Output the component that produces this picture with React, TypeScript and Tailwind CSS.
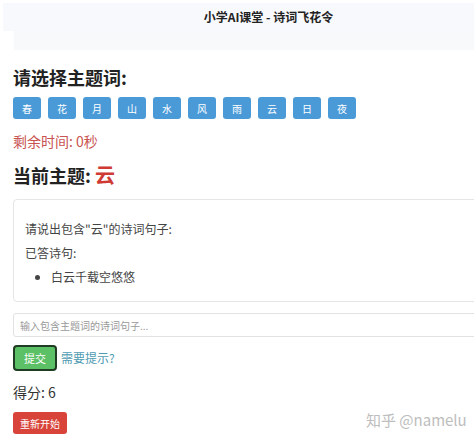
import React, { useState } from 'react';

const TOPICS = ['春', '花', '月', '山', '水', '风', '雨', '云', '日', '夜'];

function App() {
  const [topic, setTopic] = useState('云');
  const [answer, setAnswer] = useState('');
  const answered = ['白云千载空悠悠'];

  return (
    <div className="w-[474px] h-[440px] overflow-hidden bg-white relative" style={{ fontFamily: '"Noto Sans CJK SC", "Noto Sans", sans-serif' }}>
      <div className="w-[534px] text-[#333]">
        {/* Header */}
        <header className="ml-[3px] mt-[3px] h-[28px] bg-[#f8f9fc] flex items-center justify-center text-[12px] font-bold text-[#222]">
          小学AI课堂 - 诗词飞花令
        </header>
        <div className="ml-[14px] h-[19px] bg-[#f8f9fa]" />

        <main className="px-[13px]">
          <h2 className="mt-[16px] text-[18px] leading-[22px] font-bold text-[#222]">请选择主题词:</h2>

          <div className="mt-[9px] flex gap-[7px]">
            {TOPICS.map(t => (
              <button
                key={t}
                onClick={() => setTopic(t)}
                className="w-[28px] h-[22px] rounded-[3px] bg-[#4a9ad8] text-white text-[10px] flex items-center justify-center"
              >
                {t}
              </button>
            ))}
          </div>

          <p className="mt-[12px] text-[14px] leading-[20px] text-[#c9534f]">剩余时间: 0秒</p>

          <h2 className="mt-[12px] text-[18px] leading-[24px] font-bold text-[#222]">
            当前主题: <span className="text-[20px] text-[#cf3b34]">{topic}</span>
          </h2>

          {/* Question card */}
          <div className="mt-[12px] h-[103px] border border-[#e6e6e6] rounded-[4px] px-[11px] pt-[20px]">
            <p className="text-[12px] leading-[18px] text-[#444]">请说出包含"{topic}"的诗词句子:</p>
            <p className="mt-[6px] text-[12px] leading-[18px] text-[#444]">已答诗句:</p>
            <ul className="mt-[6px] list-disc pl-[26px] text-[12px] leading-[18px] text-[#444]">
              {answered.map(a => (
                <li key={a}>{a}</li>
              ))}
            </ul>
          </div>

          <input
            value={answer}
            onChange={e => setAnswer(e.target.value)}
            placeholder="输入包含主题词的诗词句子..."
            className="mt-[11px] block w-full h-[24px] border border-[#e2e2e2] rounded-[3px] px-[6px] text-[10px] placeholder-[#999] outline-none"
          />

          <div className="mt-[8px] flex items-center gap-[4px]">
            <button className="w-[44px] h-[26px] rounded-[4px] bg-[#5cc066] border-2 border-[#1f3b22] text-white text-[11px]">
              提交
            </button>
            <a className="text-[12px] text-[#4f9bb3]">需要提示?</a>
          </div>

          <p className="mt-[11px] text-[14px] leading-[20px] text-[#333]">得分: 6</p>

          <div className="mt-[10px] flex items-center">
            <button className="w-[54px] h-[22px] rounded-[3px] bg-[#d8433a] text-white text-[10px]">
              重新开始
            </button>
          </div>
        </main>
      </div>

      <div className="absolute left-[366px] top-[409px] whitespace-nowrap text-[15px] text-[#bdbdbd]">知乎 @namelu</div>
    </div>
  );
}

export default App;
